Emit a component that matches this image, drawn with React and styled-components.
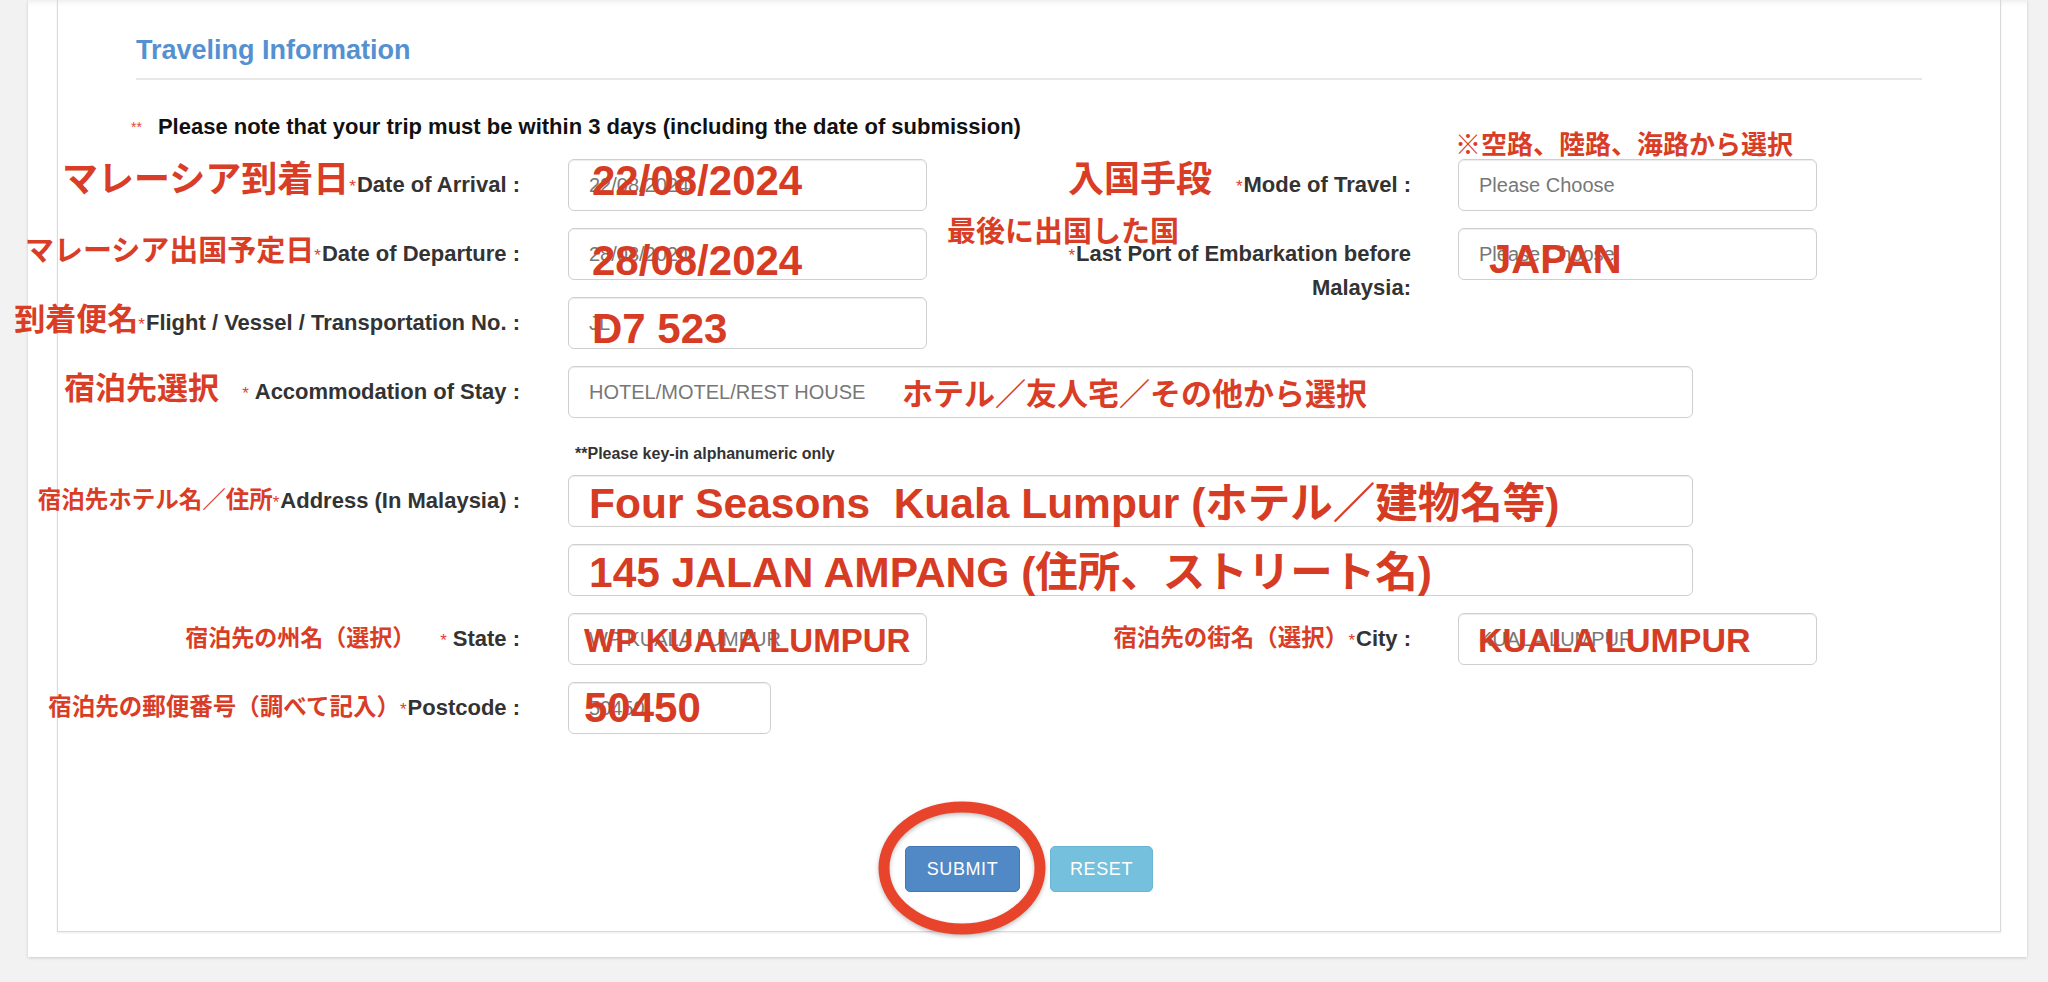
import styled, { createGlobalStyle } from 'styled-components';

const GlobalStyle = createGlobalStyle`
  html, body {
    margin: 0;
    padding: 0;
  }
  body {
    background: #f2f2f2;
    font-family: "Liberation Sans", Arial, sans-serif;
    color: #333;
    overflow: hidden;
  }
`;

const JP_FONT = `"Noto Sans CJK JP", "Liberation Sans", sans-serif`;

const App = () => {
  return (
    <Page>
      <GlobalStyle />
      <Outer>
        <Inner>
          <Heading>Traveling Information</Heading>
          <Divider />
          <Notice>
            <Stars>**</Stars>
            Please note that your trip must be within 3 days (including the date of submission)
          </Notice>

          <Form>
            <Row>
              <Label>
                <LabelText>
                  <Note $size={36}>マレーシア到着日</Note>
                  <Req>*</Req>Date of Arrival :
                </LabelText>
              </Label>
              <Field $w={359}>
                22/08/2024
                <Value $size={42} $left={23} $top={0}>22/08/2024</Value>
              </Field>
              <SideLabel>
                <LabelText>
                  <Note $size={36} $gap={24}>入国手段</Note>
                  <Req>*</Req>Mode of Travel :
                </LabelText>
              </SideLabel>
              <Field $w={359}>
                Please Choose
                <Hint>※空路、陸路、海路から選択</Hint>
              </Field>
            </Row>

            <Row>
              <Label>
                <LabelText>
                  <Note $size={29}>マレーシア出国予定日</Note>
                  <Req>*</Req>Date of Departure :
                </LabelText>
              </Label>
              <Field $w={359}>
                28/08/2024
                <Value $size={42} $left={23} $top={11}>28/08/2024</Value>
              </Field>
              <SideLabel>
                <FloatNote>最後に出国した国</FloatNote>
                <LabelText>
                  <Req>*</Req>Last Port of Embarkation before
                  <br />
                  Malaysia:
                </LabelText>
              </SideLabel>
              <Field $w={359}>
                Please Choose
                <Value $size={40} $left={30} $top={10}>JAPAN</Value>
              </Field>
            </Row>

            <Row>
              <Label>
                <LabelText>
                  <Note $size={31}>到着便名</Note>
                  <Req>*</Req>Flight / Vessel / Transportation No. :
                </LabelText>
              </Label>
              <Field $w={359}>
                JL
                <Value $size={42} $left={23} $top={10}>D7 523</Value>
              </Field>
            </Row>

            <Row>
              <Label>
                <LabelText>
                  <Note $size={31} $gap={23}>宿泊先選択</Note>
                  <Req $spaced>*</Req>Accommodation of Stay :
                </LabelText>
              </Label>
              <Field $w={1125}>
                HOTEL/MOTEL/REST HOUSE
                <InlineNote>ホテル／友人宅／その他から選択</InlineNote>
              </Field>
            </Row>

            <Alnum>**Please key-in alphanumeric only</Alnum>

            <Row>
              <Label>
                <LabelText>
                  <Note $size={23.5}>宿泊先ホテル名／住所</Note>
                  <Req>*</Req>Address (In Malaysia) :
                </LabelText>
              </Label>
              <Field $w={1125}>
                <Value $size={42.5} $left={20} $top={7}>Four Seasons  Kuala Lumpur (ホテル／建物名等)</Value>
              </Field>
            </Row>

            <Row>
              <Label />
              <Field $w={1125}>
                <Value $size={42.5} $left={20} $top={7}>145 JALAN AMPANG (住所、ストリート名)</Value>
              </Field>
            </Row>

            <Row>
              <Label>
                <LabelText>
                  <Note $size={23} $gap={25}>宿泊先の州名（選択）</Note>
                  <Req $spaced>*</Req>State :
                </LabelText>
              </Label>
              <Field $w={359}>
                WP KUALA LUMPUR
                <Value $size={33} $left={15} $top={10}>WP KUALA LUMPUR</Value>
              </Field>
              <SideLabel>
                <LabelText>
                  <Note $size={23.5}>宿泊先の街名（選択）</Note>
                  <Req>*</Req>City :
                </LabelText>
              </SideLabel>
              <Field $w={359}>
                KUALA LUMPUR
                <Value $size={34} $left={19} $top={9}>KUALA LUMPUR</Value>
              </Field>
            </Row>

            <Row>
              <Label>
                <LabelText>
                  <Note $size={23.5}>宿泊先の郵便番号（調べて記入）</Note>
                  <Req>*</Req>Postcode :
                </LabelText>
              </Label>
              <Field $w={203}>
                50450
                <Value $size={42} $left={15} $top={4}>50450</Value>
              </Field>
            </Row>
          </Form>

          <Actions>
            <Circled>
              <Button $w={115} $bg="#5089c6" $edge="#4478b2">SUBMIT</Button>
              <Ring viewBox="0 0 168 134" width="168" height="134">
                <ellipse cx="84" cy="67" rx="78" ry="61" fill="none" stroke="#e8432b" strokeWidth="11" />
              </Ring>
            </Circled>
            <Button $w={103} $bg="#75c0dd" $edge="#69b6d4">RESET</Button>
          </Actions>
        </Inner>
      </Outer>
    </Page>
  );
};

const Page = styled.div`
  height: 982px;
  padding: 0 21px 0 28px;
  box-sizing: border-box;
`;

const Outer = styled.div`
  height: 957px;
  box-sizing: border-box;
  padding: 0 26px 0 29px;
  background: #fff;
  box-shadow: 0 1px 3px rgba(0, 0, 0, 0.16), inset 0 7px 6px -6px rgba(0, 0, 0, 0.1);
`;

const Inner = styled.section`
  height: 932px;
  box-sizing: border-box;
  padding: 35px 78px 0;
  border: 1px solid #dadada;
  border-top: none;
  box-shadow: 0 1px 2px rgba(0, 0, 0, 0.08);
`;

const Heading = styled.h2`
  margin: 0;
  font-size: 27px;
  line-height: 30px;
  font-weight: 700;
  color: #5590d0;
`;

const Divider = styled.hr`
  margin: 13px 0 0;
  border: 0;
  border-top: 2px solid #e8e8e8;
`;

const Notice = styled.p`
  margin: 35px 0 0 -5px;
  font-size: 22px;
  line-height: 24px;
  font-weight: 700;
  color: #111;
`;

const Stars = styled.span`
  color: #e8442e;
  font-size: 14px;
  font-weight: 400;
  vertical-align: top;
  margin-right: 16px;
`;

const Form = styled.div`
  margin-top: 20px;
  display: flex;
  flex-direction: column;
  gap: 17px;
`;

const Row = styled.div`
  display: flex;
  align-items: flex-start;
  height: 52px;
`;

const Label = styled.label`
  flex-shrink: 0;
  width: 384px;
  margin-right: 48px;
  box-sizing: border-box;
  padding-top: 10px;
  display: flex;
  justify-content: flex-end;
  font-size: 22px;
  line-height: 32px;
  font-weight: 700;
  color: #333;
`;

const SideLabel = styled(Label)`
  position: relative;
  width: 484px;
  margin-right: 47px;
`;

const LabelText = styled.span`
  display: block;
  flex-shrink: 0;
  text-align: right;
  white-space: nowrap;
`;

const Req = styled.span`
  color: #e0402a;
  font-size: 17px;
  font-weight: 400;
  margin-right: ${p => (p.$spaced ? 6 : 1)}px;
`;

const Note = styled.span`
  font-family: ${JP_FONT};
  font-size: ${p => p.$size}px;
  font-weight: 700;
  line-height: 0;
  color: #d93d26;
  margin-right: ${p => p.$gap || 0}px;
`;

const FloatNote = styled.span`
  position: absolute;
  left: 20px;
  top: -13px;
  font-family: ${JP_FONT};
  font-size: 29px;
  font-weight: 700;
  line-height: 1;
  color: #d93d26;
`;

const Field = styled.div`
  position: relative;
  flex-shrink: 0;
  width: ${p => p.$w}px;
  height: 52px;
  box-sizing: border-box;
  padding: 0 20px;
  border: 1px solid #cfcfcf;
  border-radius: 6px;
  box-shadow: inset 0 1px 1px rgba(0, 0, 0, 0.075);
  font-size: 20px;
  line-height: 50px;
  color: #777;
  white-space: nowrap;
`;

const Value = styled.span`
  position: absolute;
  left: ${p => p.$left}px;
  top: ${p => p.$top}px;
  font-family: "Liberation Sans", "Noto Sans CJK JP", sans-serif;
  font-size: ${p => p.$size}px;
  font-weight: 700;
  line-height: 1;
  color: #d63c24;
  white-space: pre;
`;

const Hint = styled.span`
  position: absolute;
  left: -4px;
  top: -30px;
  font-family: ${JP_FONT};
  font-size: 26px;
  font-weight: 700;
  line-height: 1;
  color: #d93d26;
`;

const InlineNote = styled.span`
  position: absolute;
  left: 333px;
  top: 9px;
  font-family: ${JP_FONT};
  font-size: 31px;
  font-weight: 700;
  line-height: 1;
  color: #d93d26;
`;

const Alnum = styled.div`
  margin: 9px 0 -6px 439px;
  font-size: 16px;
  line-height: 20px;
  font-weight: 700;
  color: #333;
`;

const Actions = styled.div`
  margin-top: 112px;
  display: flex;
  justify-content: center;
  gap: 30px;
`;

const Circled = styled.span`
  position: relative;
  display: inline-flex;
`;

const Button = styled.button`
  width: ${p => p.$w}px;
  height: 46px;
  padding: 0;
  border: 1px solid ${p => p.$edge};
  border-radius: 5px;
  background: ${p => p.$bg};
  color: #fff;
  font-family: "Liberation Sans", Arial, sans-serif;
  font-size: 18px;
  letter-spacing: 0.6px;
  cursor: pointer;
`;

const Ring = styled.svg`
  position: absolute;
  left: -27px;
  top: -45px;
  pointer-events: none;
  filter: drop-shadow(0 2px 2px rgba(0, 0, 0, 0.25));
`;

export default App;
